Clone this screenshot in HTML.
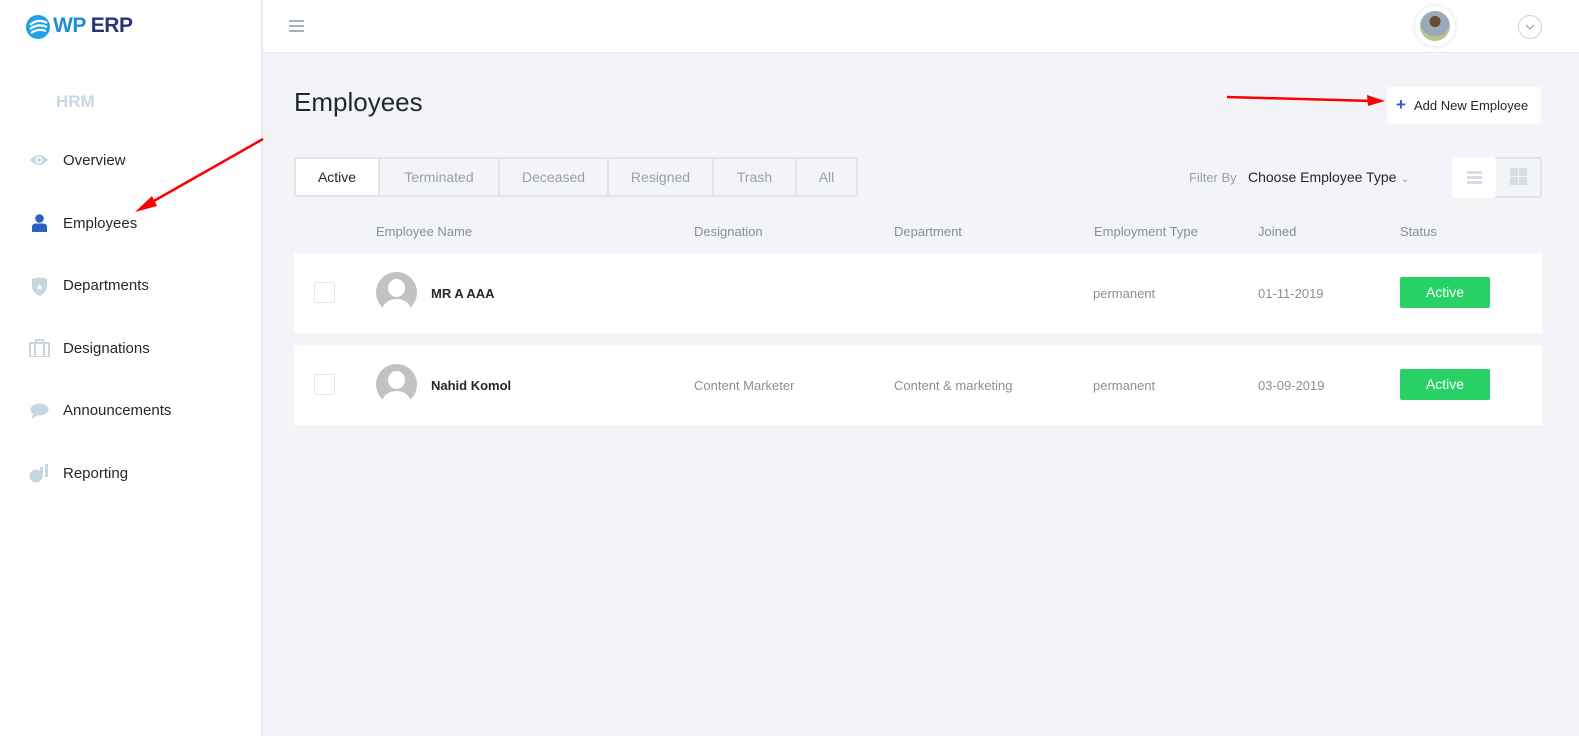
<!DOCTYPE html>
<html><head><meta charset="utf-8"><style>
*{margin:0;padding:0;box-sizing:border-box}
body{width:1579px;height:736px;overflow:hidden;background:#f3f4f8;font-family:"Liberation Sans",sans-serif;position:relative;color:#23282d}
.sb{position:absolute;left:0;top:0;width:263px;height:736px;background:#fff;border-right:2px solid #e6e9ef}
.hd{position:absolute;left:263px;top:0;right:0;height:53px;background:#fff;border-bottom:1px solid #e6e9ef}
.abs{position:absolute}
.nav{position:absolute;left:63px;font-size:15px;color:#23282d}
.ic{position:absolute;left:29px}
.tabs{position:absolute;left:294px;top:157px;width:564px;height:40px;border:2px solid #dfe3ea;border-radius:3px;display:flex;background:#f3f4f8}
.tabs div{border-right:2px solid #dfe3ea;text-align:center;line-height:36px;font-size:14px;color:#9aa0a8}
.tabs div:last-child{border-right:0}
.th{position:absolute;top:224px;font-size:13px;color:#888f98}
.row{position:absolute;left:294px;width:1248px;height:80px;background:#fff}
.row .cb{position:absolute;left:20px;top:29px;width:21px;height:21px;border:1px solid #e3e6ea;border-radius:2px}
.row .av{position:absolute;left:82px;top:19px;width:41px;height:41px;border-radius:50%;background:#c2c2c2;overflow:hidden}
.av:before{content:"";position:absolute;left:12px;top:7px;width:17px;height:18px;border-radius:50%;background:#fff}
.av:after{content:"";position:absolute;left:6px;top:27px;width:29px;height:24px;border-radius:50%;background:#fff}
.row span{position:absolute;top:33px;font-size:13px;color:#8a909a}
.row .nm{left:137px;color:#23282d;font-weight:bold}
.st{position:absolute;left:1106px;top:24px;width:90px;height:31px;background:#27d166;color:#fff;font-size:14px;text-align:center;line-height:31px;border-radius:2px}
</style></head><body>
<div class="sb">
 <svg class="abs" style="left:25px;top:14px" width="26" height="26" viewBox="0 0 26 26"><circle cx="13" cy="13" r="12" fill="#1ea2e5"/><path d="M5 11 Q13 4 22 9 M5 15 Q13 9 22 13 M6 19 Q13 14 21 17" stroke="#fff" stroke-width="2.2" fill="none"/></svg>
 <div class="abs" style="left:53px;top:14px;font-size:21px;font-weight:bold;letter-spacing:-0.5px"><span style="color:#1c8fd4">WP</span> <span style="color:#2b3378">ERP</span></div>
 <div class="abs" style="left:56px;top:92px;font-size:17px;font-weight:bold;color:#c7d9e3">HRM</div>
 <svg class="ic" style="top:153px" width="20" height="14" viewBox="0 0 20 14"><path d="M1 7Q10 -3 19 7Q10 17 1 7Z" fill="#c8d6df"/><circle cx="10" cy="7" r="3.5" fill="#fff"/><circle cx="10" cy="7" r="2" fill="#c8d6df"/></svg>
 <div class="nav" style="top:152px">Overview</div>
 <svg class="ic" style="top:214px;left:32px" width="15" height="18" viewBox="0 0 15 18"><circle cx="7.5" cy="4.5" r="4.3" fill="#2d5fc4"/><path d="M0 18V13Q0 9.5 4 9.5H11Q15 9.5 15 13V18Z" fill="#2d5fc4"/></svg>
 <div class="nav" style="top:215px">Employees</div>
 <svg class="ic" style="top:277px;left:31px" width="17" height="19" viewBox="0 0 17 19"><path d="M1 2Q8.5 -1 16 2V10Q16 15 8.5 19Q1 15 1 10Z" fill="#c8d6df"/><text x="8.5" y="13" font-size="9" fill="#fff" text-anchor="middle">★</text></svg>
 <div class="nav" style="top:277px">Departments</div>
 <svg class="ic" style="top:339px" width="21" height="18" viewBox="0 0 21 18"><path d="M7 4V1H14V4" stroke="#c8d6df" stroke-width="2" fill="none"/><rect x="1" y="4" width="19" height="14" fill="none" stroke="#c8d6df" stroke-width="2"/><path d="M6 4V18M15 4V18" stroke="#c8d6df" stroke-width="2"/></svg>
 <div class="nav" style="top:340px">Designations</div>
 <svg class="ic" style="top:403px;left:30px" width="19" height="16" viewBox="0 0 19 16"><ellipse cx="9.5" cy="6.5" rx="9" ry="6" fill="#c8d6df"/><path d="M3 10L2 16L8 12Z" fill="#c8d6df"/></svg>
 <div class="nav" style="top:402px">Announcements</div>
 <svg class="ic" style="top:463px" width="22" height="20" viewBox="0 0 22 20"><circle cx="7" cy="13" r="6.5" fill="#c8d6df"/><rect x="11" y="4" width="3" height="10" fill="#c8d6df"/><rect x="16" y="1" width="3" height="13" fill="#c8d6df"/></svg>
 <div class="nav" style="top:465px">Reporting</div>
</div>
<div class="hd">
 <div class="abs" style="left:26px;top:20px;width:15px;height:2px;background:#a7b3bf;box-shadow:0 5px #a7b3bf,0 10px #a7b3bf"></div>
 <div class="abs" style="left:1152px;top:6px;width:40px;height:40px;border-radius:50%;background:#fff;box-shadow:0 0 6px rgba(0,0,0,.12)"><div style="margin:5px;width:30px;height:30px;border-radius:50%;background:radial-gradient(circle at 50% 35%,#6a4a32 0 22%,#9aa9ba 23% 60%,#b8c38a 61%)"></div></div>
 <div class="abs" style="left:1255px;top:15px;width:24px;height:24px;border-radius:50%;border:1px solid #ccd3da"><svg width="22" height="22" viewBox="0 0 22 22"><path d="M7 9l4 4 4-4" stroke="#a0aab5" fill="none" stroke-width="1.3"/></svg></div>
</div>
<div class="abs" style="left:294px;top:87px;font-size:26px;color:#23282d">Employees</div>
<svg class="abs" style="left:1225px;top:92px" width="160" height="14"><path d="M2 5L148 9" stroke="#f00" stroke-width="2.5"/><path d="M160 9L142 3L143 14Z" fill="#f00"/></svg>
<div class="abs" style="left:1387px;top:87px;width:154px;height:37px;background:#fff;border-radius:2px;font-size:13px;line-height:38px;padding-left:27px;color:#23282d">Add New Employee<span style="position:absolute;left:9px;top:-1px;color:#2d5fc4;font-weight:bold;font-size:17px">+</span></div>
<svg class="abs" style="left:130px;top:136px" width="135" height="80"><path d="M133 3L15 70" stroke="#f00" stroke-width="2.5"/><path d="M5 76L22 60L27 70Z" fill="#f00"/></svg>
<div class="tabs"><div style="width:84px;background:#fff;color:#23282d">Active</div><div style="width:120px">Terminated</div><div style="width:109px">Deceased</div><div style="width:105px">Resigned</div><div style="width:83px">Trash</div><div style="width:59px">All</div></div>
<div class="abs" style="left:1189px;top:170px;font-size:13px;color:#9aa0a8">Filter By</div>
<div class="abs" style="left:1248px;top:169px;font-size:14px;color:#23282d">Choose Employee Type <span style="color:#9aa0a8;font-size:11px">&#8964;</span></div>
<div class="abs" style="left:1452px;top:157px;width:90px;height:41px;border:2px solid #dfe3ea;border-radius:3px"></div>
<div class="abs" style="left:1452px;top:157px;width:44px;height:41px;background:#fff;border-radius:3px"><div style="position:absolute;left:15px;top:14px;width:15px;height:3px;background:#d5dee6;box-shadow:0 5px #d5dee6,0 10px #d5dee6"></div></div>
<svg class="abs" style="left:1510px;top:168px" width="17" height="17"><rect x="0" y="0" width="8" height="8" fill="#d5dee6"/><rect x="9" y="0" width="8" height="8" fill="#d5dee6"/><rect x="0" y="9" width="8" height="8" fill="#d5dee6"/><rect x="9" y="9" width="8" height="8" fill="#d5dee6"/></svg>
<div class="th" style="left:376px">Employee Name</div><div class="th" style="left:694px">Designation</div><div class="th" style="left:894px">Department</div><div class="th" style="left:1094px">Employment Type</div><div class="th" style="left:1258px">Joined</div><div class="th" style="left:1400px">Status</div>
<div class="row" style="top:253px"><div class="cb"></div><div class="av"></div><span class="nm">MR A AAA</span><span style="left:799px">permanent</span><span style="left:964px">01-11-2019</span><div class="st">Active</div></div>
<div class="row" style="top:345px"><div class="cb"></div><div class="av"></div><span class="nm">Nahid Komol</span><span style="left:400px">Content Marketer</span><span style="left:600px">Content &amp; marketing</span><span style="left:799px">permanent</span><span style="left:964px">03-09-2019</span><div class="st">Active</div></div>
</body></html>
